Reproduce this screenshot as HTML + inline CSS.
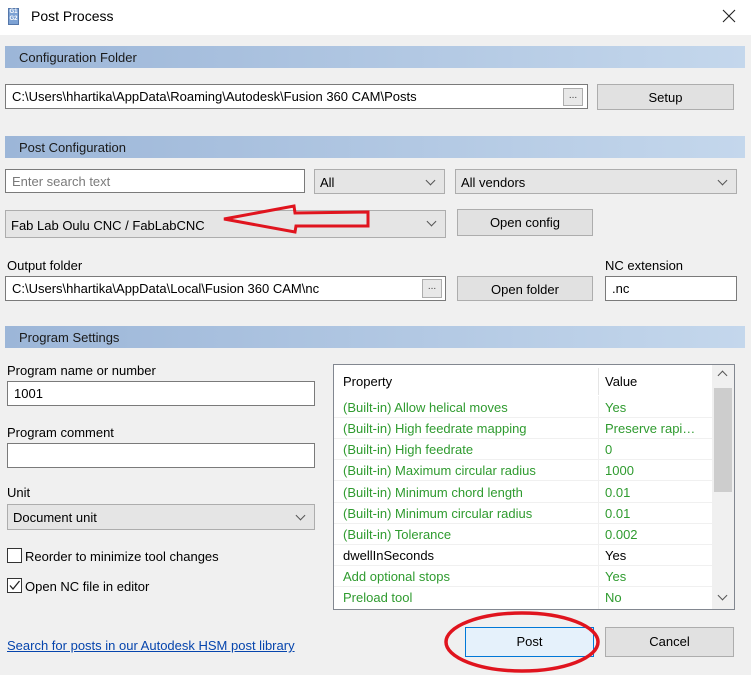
<!DOCTYPE html>
<html><head><meta charset="utf-8"><style>
*{box-sizing:border-box;margin:0;padding:0}
body{width:751px;height:675px;background:#f0f0f0;font-family:"Liberation Sans",sans-serif;font-size:13px;color:#000;position:relative;overflow:hidden}
.a{position:absolute}
.hdr{position:absolute;left:5px;width:740px;height:22px;background:linear-gradient(to right,#9cb6d8,#c4d7ec);padding:4px 0 0 14px;font-size:13px;color:#1a1a1a}
.in{position:absolute;background:#fff;border:1px solid #7a7a7a;padding:4px 0 0 6px;white-space:nowrap;overflow:hidden}
.sel{position:absolute;background:#e5e5e5;border:1px solid #adadad;padding:5px 0 0 5px;white-space:nowrap}
.sel:after{content:"";position:absolute;right:10px;top:7px;width:6px;height:6px;border-right:1px solid #555;border-bottom:1px solid #555;transform:rotate(45deg)}
.btn{position:absolute;background:#e1e1e1;border:1px solid #adadad;text-align:center;padding-top:5px}
.dots{position:absolute;background:#e8e8e8;border:1px solid #adadad;font-size:10px;text-align:center;line-height:14px;color:#444}
.lbl{position:absolute}
.row{position:absolute;left:334px;width:378px;height:21px;border-bottom:1px solid #f0f0f0;color:#2f9b2f}
.row span{position:absolute;top:3px}
.row span:first-child{left:9px}.row span:last-child{left:271px}
.cb{position:absolute;width:15px;height:15px;border:1px solid #333;background:#fff}
</style></head><body>
<div class="a" style="left:0;top:0;width:751px;height:35px;background:#fff"></div>
<div class="a" style="left:8px;top:8px;width:11px;height:17px;background:#7da2d4;border:1px solid #5577aa;font-size:6px;color:#fff;line-height:7px;text-align:center;font-weight:bold">G1<br>G2</div>
<div class="a" style="left:31px;top:8px;font-size:14px">Post Process</div>
<svg class="a" style="left:722px;top:9px" width="14" height="14"><path d="M1 1 L13 13 M13 1 L1 13" stroke="#222" stroke-width="1.1"/></svg>

<div class="hdr" style="top:46px">Configuration Folder</div>
<div class="in" style="left:5px;top:84px;width:583px;height:25px">C:\Users\hhartika\AppData\Roaming\Autodesk\Fusion 360 CAM\Posts</div>
<div class="dots" style="left:563px;top:88px;width:20px;height:18px">...</div>
<div class="btn" style="left:597px;top:84px;width:137px;height:26px">Setup</div>

<div class="hdr" style="top:136px">Post Configuration</div>
<div class="in" style="left:5px;top:169px;width:300px;height:24px;color:#7a7a7a">Enter search text</div>
<div class="sel" style="left:314px;top:169px;width:131px;height:25px">All</div>
<div class="sel" style="left:455px;top:169px;width:282px;height:25px">All vendors</div>
<div class="sel" style="left:5px;top:210px;width:441px;height:28px;padding-top:7px">Fab Lab Oulu CNC / FabLabCNC</div>
<div class="btn" style="left:457px;top:209px;width:136px;height:27px">Open config</div>

<div class="lbl" style="left:7px;top:258px">Output folder</div>
<div class="lbl" style="left:605px;top:258px">NC extension</div>
<div class="in" style="left:5px;top:276px;width:441px;height:25px">C:\Users\hhartika\AppData\Local\Fusion 360 CAM\nc</div>
<div class="dots" style="left:422px;top:279px;width:20px;height:19px">...</div>
<div class="btn" style="left:457px;top:276px;width:136px;height:25px">Open folder</div>
<div class="in" style="left:605px;top:276px;width:132px;height:25px">.nc</div>

<div class="hdr" style="top:326px">Program Settings</div>
<div class="lbl" style="left:7px;top:363px">Program name or number</div>
<div class="in" style="left:7px;top:381px;width:308px;height:25px">1001</div>
<div class="lbl" style="left:7px;top:425px">Program comment</div>
<div class="in" style="left:7px;top:443px;width:308px;height:25px"></div>
<div class="lbl" style="left:7px;top:485px">Unit</div>
<div class="sel" style="left:7px;top:504px;width:308px;height:26px">Document unit</div>
<div class="cb" style="left:7px;top:548px"></div>
<div class="lbl" style="left:25px;top:549px">Reorder to minimize tool changes</div>
<div class="cb" style="left:7px;top:578px"></div>
<svg class="a" style="left:7px;top:578px" width="15" height="15"><path d="M3 7.5 L6 11 L12.5 3" stroke="#222" stroke-width="1.3" fill="none"/></svg>
<div class="lbl" style="left:25px;top:579px">Open NC file in editor</div>
<div class="lbl" style="left:7px;top:638px;color:#0645ad;text-decoration:underline">Search for posts in our Autodesk HSM post library</div>

<div class="a" style="left:333px;top:364px;width:402px;height:246px;background:#fff;border:1px solid #828790"></div>
<div class="a" style="left:343px;top:374px">Property</div>
<div class="a" style="left:598px;top:368px;width:1px;height:27px;background:#e5e5e5"></div>
<div class="a" style="left:605px;top:374px">Value</div>
<div class="a" style="left:712px;top:365px;width:22px;height:244px;background:#f0f0f0"></div>
<div class="a" style="left:714px;top:388px;width:18px;height:104px;background:#cdcdcd"></div>
<div class="a" style="left:719px;top:372px;width:7px;height:7px;border-left:1.5px solid #555;border-top:1.5px solid #555;transform:rotate(45deg)"></div>
<div class="a" style="left:719px;top:592px;width:7px;height:7px;border-right:1.5px solid #555;border-bottom:1.5px solid #555;transform:rotate(45deg)"></div>
<div class="a" style="left:598px;top:396px;width:1px;height:213px;background:#f0f0f0"></div>
<div class="row" style="top:397px"><span>(Built-in) Allow helical moves</span><span>Yes</span></div>
<div class="row" style="top:418px"><span>(Built-in) High feedrate mapping</span><span>Preserve rapi…</span></div>
<div class="row" style="top:439px"><span>(Built-in) High feedrate</span><span>0</span></div>
<div class="row" style="top:460px"><span>(Built-in) Maximum circular radius</span><span>1000</span></div>
<div class="row" style="top:482px"><span>(Built-in) Minimum chord length</span><span>0.01</span></div>
<div class="row" style="top:503px"><span>(Built-in) Minimum circular radius</span><span>0.01</span></div>
<div class="row" style="top:524px"><span>(Built-in) Tolerance</span><span>0.002</span></div>
<div class="row" style="top:545px;color:#000"><span>dwellInSeconds</span><span>Yes</span></div>
<div class="row" style="top:566px"><span>Add optional stops</span><span>Yes</span></div>
<div class="row" style="top:587px;border:none"><span>Preload tool</span><span>No</span></div>

<div class="btn" style="left:465px;top:627px;width:129px;height:30px;background:#e5f1fb;border:1px solid #0078d7;padding-top:6px">Post</div>
<div class="btn" style="left:605px;top:627px;width:129px;height:30px;padding-top:6px">Cancel</div>

<svg class="a" style="left:0;top:0" width="751" height="675">
<ellipse cx="522" cy="642" rx="76" ry="29" fill="none" stroke="#e0141e" stroke-width="3.5"/>
<path d="M224 219 L294 206 L295 213 L368 212 L368 226 L296 226 L295 232 Z" fill="none" stroke="#e0141e" stroke-width="3"/>
</svg>
</body></html>
